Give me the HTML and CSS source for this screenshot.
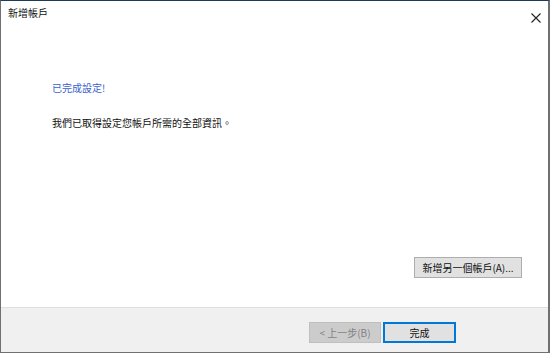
FILE: index.html
```html
<!DOCTYPE html>
<html lang="zh-Hant">
<head>
<meta charset="utf-8">
<link rel="stylesheet" href="styles.css">
</head>
<body>
<div class="window">
  <div class="titlebar">
    <span class="title">新增帳戶</span>
    <span class="close" aria-label="關閉">
      <svg width="10" height="10" viewBox="0 0 10 10"><path d="M0.5 0.5 L9.5 9.5 M9.5 0.5 L0.5 9.5" stroke="#222" stroke-width="1.1" fill="none"/></svg>
    </span>
  </div>
  <div class="content">
    <div class="heading">已完成設定!</div>
    <div class="message">我們已取得設定您帳戶所需的全部資訊。</div>
    <div class="spacer"></div>
    <div class="add-row">
      <button class="btn add">新增另一個帳戶(A)...</button>
    </div>
  </div>
  <div class="footer">
    <button class="btn back" disabled>&lt; 上一步(B)</button>
    <button class="btn finish">完成</button>
  </div>
</div>
</body>
</html>
```
FILE: styles.css
```css
* { box-sizing: border-box; }
html, body { margin: 0; padding: 0; }
body {
  width: 550px;
  height: 353px;
  font-family: "Noto Sans CJK TC", "Noto Sans", sans-serif;
  font-size: 10px;
  color: #111111;
  background: #ffffff;
}
.window {
  width: 550px;
  height: 353px;
  display: flex;
  flex-direction: column;
  border-top: 1px solid #1f3b57;
  border-left: 1px solid #707070;
  border-right: 2px solid #707070;
  border-bottom: 1px solid #707070;
  background: #ffffff;
}
.titlebar {
  height: 30px;
  display: flex;
  align-items: flex-start;
  justify-content: space-between;
  padding: 5px 0 0 7px;
}
.title { font-size: 10px; line-height: 14px; color: #111; }
.close {
  display: flex;
  padding-top: 7px;
  margin-right: 7px;
}
.content {
  flex: 1;
  display: flex;
  flex-direction: column;
  padding: 50px 26px 0 51px;
}
.heading { color: #3a5fcd; line-height: 14px; }
.message { margin-top: 21px; line-height: 14px; }
.spacer { flex: 1; }
.add-row {
  display: flex;
  justify-content: flex-end;
  padding-bottom: 29px;
}
.btn {
  font-family: "Noto Sans CJK TC", "Noto Sans", sans-serif;
  font-size: 10px;
  height: 21px;
  padding: 0;
  background: #e1e1e1;
  border: 1px solid #adadad;
  color: #111;
  line-height: 19px;
  white-space: nowrap;
}
.add { width: 108px; }
.footer {
  height: 45px;
  background: #f0f0f0;
  border-top: 1px solid #dfdfdf;
  display: flex;
  justify-content: flex-end;
  align-items: flex-start;
  gap: 2px;
  padding: 14px 92px 0 0;
}
.back {
  width: 72px;
  background: #cccccc;
  border-color: #bfbfbf;
  color: #838383;
}
.finish {
  width: 73px;
  border: 2px solid #0078d7;
  line-height: 17px;
}
```
